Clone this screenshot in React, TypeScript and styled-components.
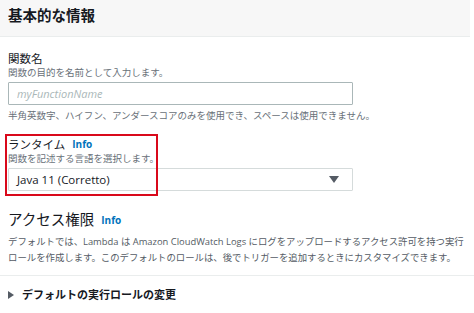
import React from 'react'
import styled, { createGlobalStyle } from 'styled-components'

const GlobalStyle = createGlobalStyle`
  html, body {
    margin: 0;
    padding: 0;
    background: #fff;
  }
  body {
    font-family: "Open Sans", "Noto Sans CJK JP", sans-serif;
    color: #16191f;
  }
`

export default function App(): JSX.Element {
  return (
    <>
      <GlobalStyle />
      <Page>
        <Header>
          <HeaderTitle>基本的な情報</HeaderTitle>
        </Header>
        <Body>
          <Field>
            <Label>関数名</Label>
            <Desc>関数の目的を名前として入力します。</Desc>
            <Input placeholder="myFunctionName" />
            <Hint>半角英数字、ハイフン、アンダースコアのみを使用でき、スペースは使用できません。</Hint>
          </Field>
          <RuntimeField>
            <Highlight />
            <Label>
              ランタイム <Info>Info</Info>
            </Label>
            <Desc>関数を記述する言語を選択します。</Desc>
            <Select>
              <span>Java 11 (Corretto)</span>
              <Caret />
            </Select>
          </RuntimeField>
          <Section>
            <SectionTitle>
              アクセス権限 <Info>Info</Info>
            </SectionTitle>
            <Paragraph>
              デフォルトでは、Lambda は Amazon CloudWatch Logs にログをアップロードするアクセス許可を持つ実行ロールを作成します。このデフォルトのロールは、後でトリガーを追加するときにカスタマイズできます。
            </Paragraph>
          </Section>
        </Body>
        <Expander>
          <Arrow />
          デフォルトの実行ロールの変更
        </Expander>
      </Page>
    </>
  )
}

const Page = styled.div`
  width: 474px;
  height: 313px;
  overflow: hidden;
`

const Header = styled.div`
  height: 37px;
  margin-right: 4px;
  background: #f7f7f7;
  border-bottom: 1px solid #eaeded;
  display: flex;
  align-items: center;
  padding: 0 8px;
  box-sizing: border-box;
`

const HeaderTitle = styled.h2`
  margin: 0 0 7px;
  font-size: 14.5px;
  font-weight: 700;
  color: #16191f;
`

const Body = styled.div`
  padding: 14px 8px 0;
`

const Field = styled.div`
  display: flex;
  flex-direction: column;
`

const RuntimeField = styled.div`
  position: relative;
  display: flex;
  flex-direction: column;
  margin-top: 15px;
`

const Highlight = styled.div`
  position: absolute;
  left: -3px;
  top: -3px;
  width: 153px;
  height: 62px;
  border: 2px solid #d9091b;
  box-sizing: border-box;
  pointer-events: none;
`

const Label = styled.div`
  font-size: 11.5px;
  line-height: 15px;
  color: #16191f;
  display: flex;
  align-items: center;
  gap: 4px;
`

const Info = styled.span`
  color: #0073bb;
  font-size: 10px;
  font-weight: 700;
  margin-left: 3px;
`

const Desc = styled.div`
  font-size: 9.5px;
  line-height: 13px;
  color: #687078;
`

const Input = styled.input`
  width: 345px;
  height: 23px;
  margin-top: 3px;
  box-sizing: border-box;
  border: 1px solid #aab7b8;
  border-radius: 1px;
  padding: 0 8px;
  font-family: "Open Sans", "Noto Sans CJK JP", sans-serif;
  font-size: 11px;
  &::placeholder {
    color: #aab7b8;
    font-style: italic;
  }
`

const Hint = styled.div`
  font-size: 9.5px;
  line-height: 13px;
  color: #687078;
  margin-top: 4px;
`

const Select = styled.div`
  width: 345px;
  height: 23px;
  margin-top: 3px;
  box-sizing: border-box;
  border: 1px solid #d5dbdb;
  border-radius: 1px;
  padding: 0 10px 0 8px;
  display: flex;
  align-items: center;
  justify-content: space-between;
  font-size: 11.5px;
  color: #16191f;
`

const Caret = styled.span`
  width: 0;
  height: 0;
  border-left: 5px solid transparent;
  border-right: 5px solid transparent;
  border-top: 7px solid #545b64;
  margin-right: 3px;
`

const Section = styled.div`
  margin-top: 18px;
`

const SectionTitle = styled.div`
  font-size: 14.5px;
  line-height: 22px;
  color: #16191f;
  display: flex;
  align-items: center;
  gap: 4px;
`

const Paragraph = styled.p`
  margin: 3px 0 0;
  font-size: 9.4px;
  line-height: 16px;
  color: #545b64;
  width: 460px;
`

const Expander = styled.div`
  margin-top: 9px;
  border-top: 1px solid #eaeded;
  padding: 10px 8px 0;
  display: flex;
  align-items: center;
  gap: 8px;
  font-size: 11px;
  font-weight: 700;
  line-height: 17px;
  color: #16191f;
`

const Arrow = styled.span`
  width: 0;
  height: 0;
  border-top: 4px solid transparent;
  border-bottom: 4px solid transparent;
  border-left: 6px solid #545b64;
`
